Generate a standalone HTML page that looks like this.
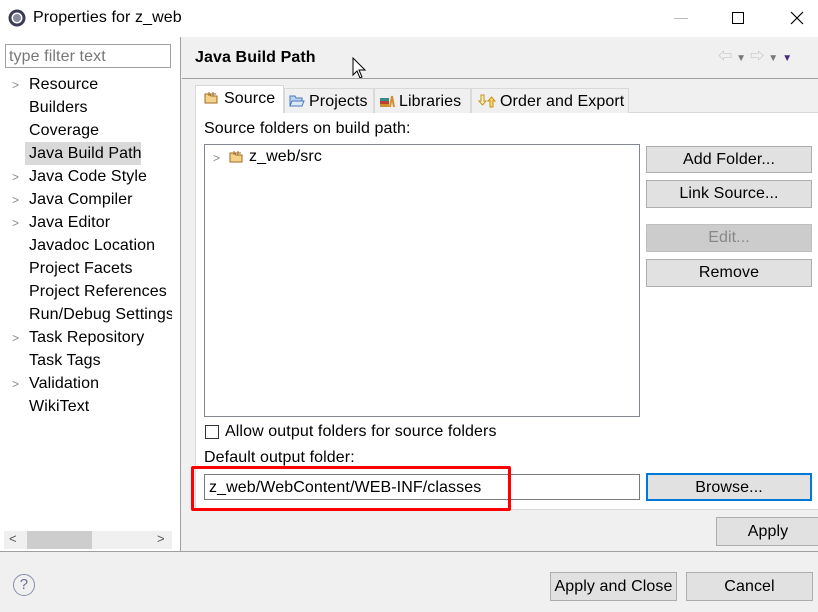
<!DOCTYPE html>
<html><head><meta charset="utf-8"><style>
*{box-sizing:border-box;margin:0;padding:0}
body{width:818px;height:612px;overflow:hidden;background:#f0f0f0;font-family:"Liberation Sans","Noto Sans CJK SC",sans-serif;font-size:16px;letter-spacing:0.1px;color:#000;position:relative}
.a{position:absolute;white-space:nowrap}
.btn{position:absolute;background:#e1e1e1;border:1px solid #adadad;text-align:center;line-height:26px;font-size:16px}
.tree div{position:absolute;left:29px;height:23px;line-height:24px;font-size:16px;white-space:nowrap}
.arr{position:absolute;left:12px;color:#888;font-size:12px}
.tab{position:absolute;border:1px solid #d9d9d9;border-bottom:none;background:#f0f0f0;font-size:16px}
.tab svg{vertical-align:-2px;margin-right:4px}
</style></head><body>
<div class="a" style="left:0;top:0;width:818px;height:37px;background:#fff"></div>
<svg class="a" style="left:7px;top:8px" width="20" height="20" viewBox="0 0 20 20"><circle cx="10" cy="10" r="8.5" fill="#3b3b55"/><circle cx="10" cy="10" r="5.5" fill="#fff"/><circle cx="10" cy="10" r="4" fill="#8a8aa0"/></svg>
<div class="a" style="left:33px;top:9px;font-size:16px">Properties for z_web</div>
<div class="a" style="left:674px;top:18px;width:14px;height:1px;background:#bbb"></div>
<div class="a" style="left:732px;top:12px;width:12px;height:12px;border:1px solid #000"></div>
<svg class="a" style="left:790px;top:11px" width="14" height="14"><path d="M1 1L13 13M13 1L1 13" stroke="#000" stroke-width="1.2"/></svg>

<div class="a" style="left:0;top:37px;width:181px;height:514px;background:#fff;border-right:1px solid #a0a0a0"></div>
<div class="a" style="left:5px;top:44px;width:166px;height:24px;border:1px solid #a0a0a0;background:#fff;color:#777;padding-left:3px;line-height:23px">type filter text</div>
<div class="a" style="left:25px;top:142px;width:116px;height:23px;background:#d9d9d9"></div>
<div class="tree">
<div style="top:73px">Resource</div><div style="top:96px">Builders</div><div style="top:119px">Coverage</div><div style="top:142px">Java Build Path</div><div style="top:165px">Java Code Style</div><div style="top:188px">Java Compiler</div><div style="top:211px">Java Editor</div><div style="top:234px">Javadoc Location</div><div style="top:257px">Project Facets</div><div style="top:280px">Project References</div><div style="top:303px;width:143px;overflow:hidden">Run/Debug Settings</div><div style="top:326px">Task Repository</div><div style="top:349px">Task Tags</div><div style="top:372px">Validation</div><div style="top:395px">WikiText</div>
</div>
<span class="arr" style="top:78px">&gt;</span><span class="arr" style="top:170px">&gt;</span><span class="arr" style="top:193px">&gt;</span><span class="arr" style="top:216px">&gt;</span><span class="arr" style="top:331px">&gt;</span><span class="arr" style="top:377px">&gt;</span>
<div class="a" style="left:4px;top:531px;width:168px;height:18px;background:#f0f0f0"></div>
<div class="a" style="left:27px;top:531px;width:65px;height:18px;background:#cdcdcd"></div>
<div class="a" style="left:9px;top:531px;color:#555;font-size:13px">&lt;</div>
<div class="a" style="left:157px;top:531px;color:#555;font-size:13px">&gt;</div>

<div class="a" style="left:195px;top:49px;font-weight:bold;font-size:16px">Java Build Path</div>
<svg class="a" style="left:352px;top:57px" width="16" height="24"><path d="M1 1V18L5 14L8 21L10 20L7 13H13Z" fill="#fff" stroke="#000"/></svg>
<div class="a" style="left:718px;top:46px;color:#bbb;font-size:14px">⇦ <span style="color:#777;font-size:10px">▼</span> ⇨ <span style="color:#777;font-size:10px">▼</span> <span style="color:#4a2a7a;font-size:10px">▼</span></div>
<div class="a" style="left:182px;top:78px;width:636px;height:1px;background:#a0a0a0"></div>

<div class="a" style="left:195px;top:112px;width:623px;height:398px;background:#fff;border-top:1px solid #d9d9d9;border-left:1px solid #d9d9d9;border-bottom:1px solid #d9d9d9"></div>
<div class="tab" style="left:195px;top:85px;width:89px;height:28px;background:#fff;padding:4px 0 0 8px"><svg width="16" height="14"><path d="M1 3H6L7 5H13V12H1Z" fill="#f5d28a" stroke="#a06a20"/><path d="M5 1V5M9 1V5M3 3H12" stroke="#a06a20"/></svg>Source</div>
<div class="tab" style="left:284px;top:88px;width:90px;height:25px;padding:4px 0 0 4px"><svg width="16" height="14"><path d="M1 2H6L7 4H13V12H1Z" fill="#bcd4f2" stroke="#4a78c0"/><path d="M3 7H15L13 12H1Z" fill="#dbe8f8" stroke="#4a78c0"/></svg>Projects</div>
<div class="tab" style="left:374px;top:88px;width:97px;height:25px;padding:4px 0 0 4px"><svg width="16" height="14"><rect x="1" y="4" width="9" height="3" fill="#3a8a8a"/><rect x="1" y="7" width="9" height="3" fill="#c04030"/><rect x="1" y="10" width="9" height="3" fill="#d09030"/><path d="M11 13L13 2L15 13" stroke="#d09030" stroke-width="2" fill="none"/></svg>Libraries</div>
<div class="tab" style="left:471px;top:88px;width:158px;height:25px;padding:4px 0 0 6px"><svg width="18" height="14"><path d="M3 1V7H1L4.5 11L8 7H6V1Z" fill="#fff3c0" stroke="#c89020"/><path d="M12 13V7H10L13.5 3L17 7H15V13Z" fill="#ffd860" stroke="#c89020"/></svg>Order and Export</div>
<div class="a" style="left:204px;top:120px">Source folders on build path:</div>
<div class="a" style="left:204px;top:144px;width:436px;height:273px;border:1px solid #828790;background:#fff"></div>
<div class="a" style="left:213px;top:151px;color:#888;font-size:12px">&gt;</div>
<svg class="a" style="left:229px;top:150px" width="16" height="14"><path d="M1 3H6L7 5H13V12H1Z" fill="#f5d28a" stroke="#a06a20"/><path d="M5 1V5M9 1V5M3 3H12" stroke="#a06a20"/></svg>
<div class="a" style="left:249px;top:148px">z_web/src</div>
<div class="btn" style="left:646px;top:146px;width:166px;height:27px">Add Folder...</div>
<div class="btn" style="left:646px;top:180px;width:166px;height:28px">Link Source...</div>
<div class="btn" style="left:646px;top:224px;width:166px;height:28px;background:#ccc;border-color:#bfbfbf;color:#888">Edit...</div>
<div class="btn" style="left:646px;top:259px;width:166px;height:28px">Remove</div>
<div class="a" style="left:205px;top:425px;width:14px;height:14px;border:1px solid #333;background:#fff"></div>
<div class="a" style="left:225px;top:423px">Allow output folders for source folders</div>
<div class="a" style="left:204px;top:449px">Default output folder:</div>
<div class="a" style="left:204px;top:474px;width:436px;height:26px;border:1px solid #7a7a7a;background:#fff;padding-left:4px;line-height:26px">z_web/WebContent/WEB-INF/classes</div>
<div class="btn" style="left:646px;top:473px;width:166px;height:28px;border:2px solid #0078d7;line-height:25px">Browse...</div>
<div class="a" style="left:191px;top:466px;width:320px;height:45px;border:3px solid #ff0000;border-radius:2px"></div>
<div class="btn" style="left:716px;top:517px;width:104px;height:29px;line-height:28px">Apply</div>
<div class="a" style="left:0;top:551px;width:818px;height:1px;background:#a0a0a0"></div>
<div class="a" style="left:13px;top:574px;width:22px;height:22px;border:1.5px solid #8890a8;border-radius:50%;color:#6a7090;text-align:center;line-height:19px;font-size:15px">?</div>
<div class="btn" style="left:550px;top:572px;width:127px;height:29px;line-height:28px">Apply and Close</div>
<div class="btn" style="left:686px;top:572px;width:127px;height:29px;line-height:28px">Cancel</div>
</body></html>
